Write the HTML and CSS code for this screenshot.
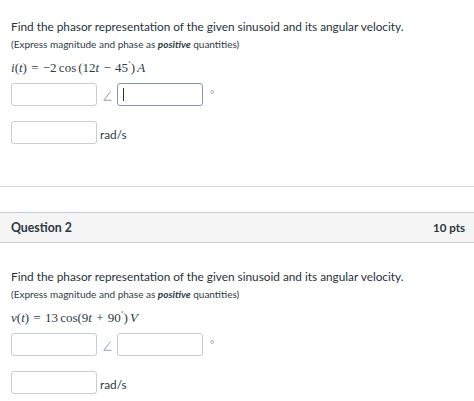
FILE: index.html
```html
<!DOCTYPE html>
<html>
<head>
<meta charset="utf-8">
<link rel="stylesheet" href="styles.css">
</head>
<body>
<div class="question first">
  <div class="body">
    <p class="prompt">Find the phasor representation of the given sinusoid and its angular velocity.</p>
    <p class="note">(Express magnitude and phase as <strong><em>positive</em></strong> quantities)</p>
    <p class="formula"><i>i</i>(<i>t</i>) <span class="op">=</span> −2 cos<span class="sp"></span>(12<i>t</i> <span class="op">−</span> 45<sup>˚</sup>) <i>A</i></p>
    <div class="row">
      <span class="box"></span>
      <span class="angle"><svg width="9" height="10" viewBox="0 0 9 10"><path d="M7.5 0.5 L0.8 9.3 L8.5 9.3" fill="none" stroke="#8a949b" stroke-width="0.9"/></svg></span>
      <span class="box focus"><span class="caret"></span></span>
      <span class="deg">°</span>
    </div>
    <div class="row">
      <span class="box"></span>
      <span class="unit">rad/s</span>
    </div>
  </div>
</div>
<div class="question second">
  <div class="header">
    <span class="qname">Question 2</span>
    <span class="pts">10 pts</span>
  </div>
  <div class="body">
    <p class="prompt">Find the phasor representation of the given sinusoid and its angular velocity.</p>
    <p class="note">(Express magnitude and phase as <strong><em>positive</em></strong> quantities)</p>
    <p class="formula"><i>v</i>(<i>t</i>) <span class="op">=</span> 13 cos(9<i>t</i> <span class="op">+</span> 90<sup>˚</sup>) <i>V</i></p>
    <div class="row">
      <span class="box"></span>
      <span class="angle"><svg width="9" height="10" viewBox="0 0 9 10"><path d="M7.5 0.5 L0.8 9.3 L8.5 9.3" fill="none" stroke="#8a949b" stroke-width="0.9"/></svg></span>
      <span class="box"></span>
      <span class="deg">°</span>
    </div>
    <div class="row">
      <span class="box"></span>
      <span class="unit">rad/s</span>
    </div>
  </div>
</div>
</body>
</html>
```

FILE: styles.css
```css
html, body {
  margin: 0;
  padding: 0;
  background: #ffffff;
}
body {
  font-family: Lato, "Noto Sans", sans-serif;
  color: #2d3b45;
  width: 474px;
  overflow: hidden;
}
p { margin: 0; }

.question.first {
  border-bottom: 1px solid #d6dadd;
  padding: 19px 11px 42px 11px;
}
.question.second {
  margin-top: 25px;
  border-top: 1px solid #c7cdd1;
}
.header {
  display: flex;
  justify-content: space-between;
  align-items: center;
  height: 29px;
  padding: 0 9px 0 11px;
  background: #f5f5f5;
  border-bottom: 1px solid #c7cdd1;
  font-weight: 700;
  font-size: 12.3px;
  color: #2a3640;
}
.pts { font-weight: 700; font-size: 11.5px; }
.second .body { padding: 26px 11px 0 11px; }

.prompt {
  font-size: 11.8px;
  line-height: 16px;
  margin-bottom: 2px;
  color: #26323b;
}
.note {
  font-size: 10px;
  line-height: 14px;
  margin-bottom: 9px;
}
.note strong { font-weight: 700; }
.formula {
  font-family: "Liberation Serif", "DejaVu Serif", serif;
  font-size: 13px;
  line-height: 16px;
  color: #2d3b45;
  margin-bottom: 7px;
  word-spacing: -1px;
}
.formula i { font-style: italic; }
.formula .op { margin: 0 2px; }
.formula .sp { display: inline-block; width: 2px; }
.formula sup { font-size: 8px; vertical-align: 5px; line-height: 0; }

.row {
  display: flex;
  align-items: center;
  height: 23px;
  margin-bottom: 15px;
}
.row:last-child { margin-bottom: 0; }
.box {
  display: flex;
  align-items: center;
  box-sizing: border-box;
  width: 86px;
  height: 23px;
  border: 1px solid #c7cdd1;
  border-radius: 3px;
  background: #fff;
}
.box.focus {
  border-color: #8496a8;
}
.caret {
  display: block;
  width: 1px;
  height: 13px;
  margin-left: 5px;
  background: #333;
}
.angle {
  display: flex;
  justify-content: center;
  width: 20px;
  padding-top: 3px;
}
.deg {
  margin-left: 7px;
  font-size: 10px;
  color: #8a949b;
  position: relative;
  top: -1px;
}
.unit {
  margin-left: 3px;
  font-size: 11.8px;
  position: relative;
  top: 2px;
}
```
